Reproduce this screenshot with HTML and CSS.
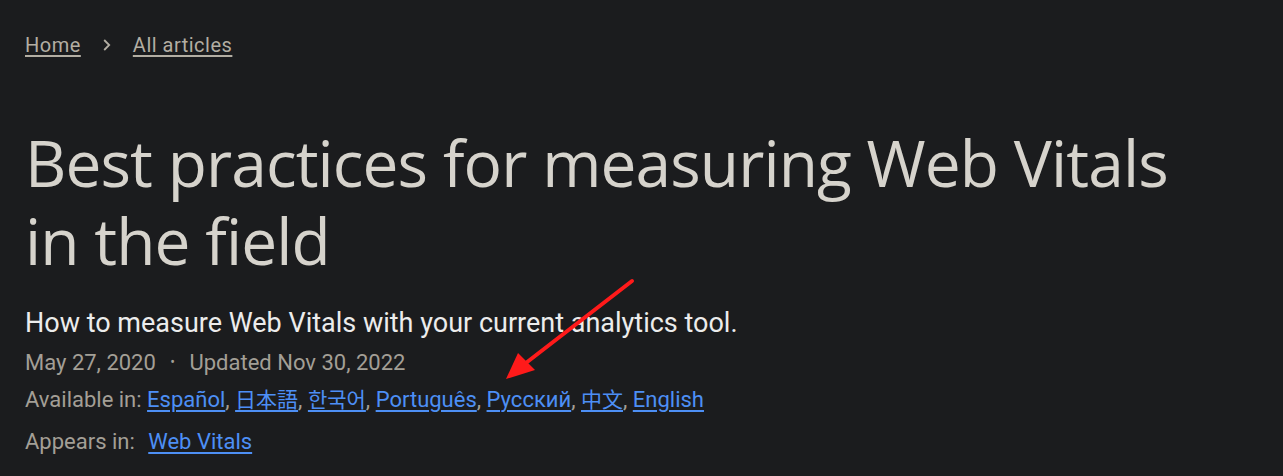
FILE: index.html
```html
<!DOCTYPE html>
<html lang="en">
<head>
<meta charset="utf-8">
<title>Best practices for measuring Web Vitals in the field</title>
<link rel="stylesheet" href="styles.css">
</head>
<body>
<main class="page">
  <nav class="crumbs">
    <a href="#" class="crumb">Home</a>
    <svg class="chev" width="8" height="12" viewBox="0 0 8 12"><path d="M1.2 1 L6.2 6 L1.2 11" fill="none" stroke="currentColor" stroke-width="1.8"/></svg>
    <a href="#" class="crumb">All articles</a>
  </nav>
  <h1 class="title">Best practices for measuring Web Vitals in the field</h1>
  <p class="subtitle">How to measure Web Vitals with your current analytics tool.</p>
  <p class="meta">May 27, 2020 <span class="dot">•</span> Updated Nov 30, 2022</p>
  <p class="langs">Available in: <a href="#">Español</a>, <a href="#" lang="ja">日本語</a>, <a href="#" lang="ko">한국어</a>, <a href="#">Português</a>, <a href="#">Русский</a>, <a href="#" lang="zh">中文</a>, <a href="#">English</a></p>
  <p class="appears">Appears in: <a href="#">Web Vitals</a></p>
</main>
<svg class="arrow" width="1283" height="476" viewBox="0 0 1283 476">
  <line x1="632" y1="281" x2="522" y2="366" stroke="#ff1a1a" stroke-width="4" stroke-linecap="round"/>
  <polygon points="506,379 518,353 535,370" fill="#ff1a1a"/>
</svg>
</body>
</html>
```
FILE: styles.css
```css
html, body {
  margin: 0;
  padding: 0;
  background: #1b1c1e;
}
body {
  width: 1283px;
  height: 476px;
  overflow: hidden;
  position: relative;
  font-family: Roboto, "Liberation Sans", "Noto Sans CJK JP", sans-serif;
}
.page {
  padding: 31px 25px 0 25px;
}
.crumbs {
  display: flex;
  align-items: center;
  font-size: 20px;
  line-height: 28px;
  height: 28px;
  letter-spacing: 0.5px;
  color: #b3aea3;
}
.crumb {
  color: #b3aea3;
  text-decoration: underline;
  text-underline-offset: 3px;
  text-decoration-thickness: 2px;
}
.chev {
  margin: 0 22px;
  color: #b3aea3;
}
.title {
  margin: 65px 0 0 0;
  font-family: "Open Sans", Roboto, sans-serif;
  font-weight: 400;
  font-size: 64px;
  line-height: 78px;
  color: #d6d3cc;
  letter-spacing: -0.9px;
  max-width: 1180px;
}
.subtitle {
  margin: 25px 0 0 0;
  font-size: 27px;
  line-height: 36px;
  color: #ececec;
}
.meta {
  margin: 5.5px 0 0 0;
  font-size: 22px;
  line-height: 30px;
  color: #a39f96;
}
.dot {
  margin: 0 9px;
  font-size: 14px;
  vertical-align: 3px;
}
.langs {
  margin: 5px 0 0 0;
  font-size: 22px;
  line-height: 30px;
  color: #a39f96;
}
.langs a, .appears a {
  color: #4d8ff5;
  text-decoration: underline;
  text-underline-offset: 3px;
  text-decoration-thickness: 2px;
}
.langs a:lang(ja) {
  font-family: "Noto Sans CJK JP", sans-serif;
  font-size: 21px;
}
.langs a:lang(ko) {
  font-family: "Noto Sans CJK KR", sans-serif;
  font-size: 21px;
}
.langs a:lang(zh) {
  font-family: "Noto Sans CJK SC", sans-serif;
  font-size: 21px;
}
.appears {
  margin: 12.5px 0 0 0;
  font-size: 22px;
  line-height: 30px;
  color: #a39f96;
}
.appears a {
  margin-left: 8px;
}
.arrow {
  position: absolute;
  left: 0;
  top: 0;
  pointer-events: none;
}
```
